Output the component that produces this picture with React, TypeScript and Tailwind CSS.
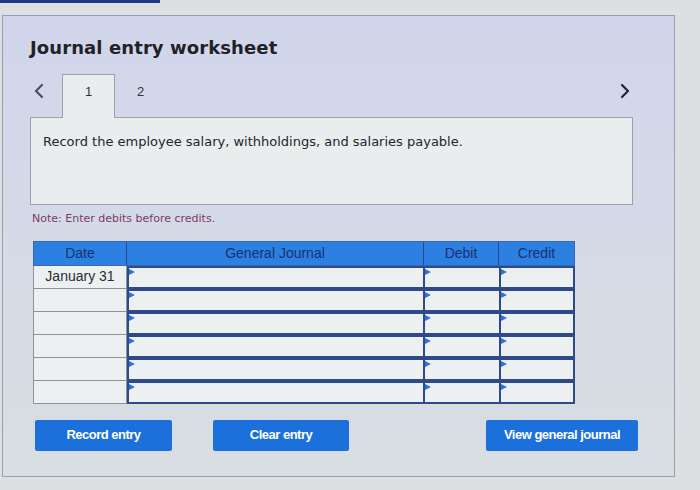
import React from "react";

const rows = ["January 31", "", "", "", "", ""];

function Flag() {
  return <span className="absolute left-0 top-[1px] w-0 h-0 border-l-[6px] border-l-[#2f6fd6] border-y-[3px] border-y-transparent" />;
}

function InputCell({ w }: { w: string }) {
  return (
    <div className={`relative ${w} h-full border-2 border-[#2e4a88] bg-[#edf0f0] -ml-[2px] first:ml-0`}>
      <Flag />
    </div>
  );
}

function Chevron({ dir, className }: { dir: "l" | "r"; className: string }) {
  return (
    <svg width="12" height="16" viewBox="0 0 12 16" className={className}>
      <path d={dir === "l" ? "M9 2 L3 8 L9 14" : "M3 2 L9 8 L3 14"} fill="none" stroke="currentColor" strokeWidth="2.2" strokeLinecap="round" strokeLinejoin="round" />
    </svg>
  );
}

export default function App() {
  return (
    <div className="w-[700px] h-[490px] bg-[#dde0e3] overflow-hidden relative" style={{ fontFamily: "'DejaVu Sans', sans-serif" }}>
      {/* top strip */}
      <div className="h-[15px] flex items-start">
        <div className="w-[160px] h-[3px] bg-[#1d3a8a]" />
      </div>

      <div className="ml-[2px] w-[673px] h-[462px] border border-[#9aa0ab] bg-gradient-to-b from-[#d1d5eb] via-[#d5dae7] to-[#d9dee2] px-[27px]">
        <h1 className="pt-[21px] text-[18px] font-bold text-[#1f2227] leading-[22px] tracking-[0.1px]">Journal entry worksheet</h1>

        {/* tabs */}
        <div className="relative mt-[15px] h-[44px] flex items-start">
          <Chevron dir="l" className="ml-[3px] mt-[9px] text-[#4a505c]" />
          <div className="ml-[17px] w-[53px] h-[44px] border border-b-0 border-[#9aa0ab] bg-[#eaedee] relative z-10 flex justify-center pt-[7px]">
            <span className="text-[13px] text-[#333]" style={{ fontFamily: "'Liberation Sans', sans-serif" }}>1</span>
          </div>
          <span className="ml-[22px] pt-[8px] text-[13px] text-[#333]" style={{ fontFamily: "'Liberation Sans', sans-serif" }}>2</span>
          <Chevron dir="r" className="ml-auto mr-[16px] mt-[9px] text-[#23272f]" />
        </div>

        {/* question box */}
        <div className="-mt-px w-[603px] h-[88px] border border-[#9aa0ab] bg-[#eaedee] pt-[14px] pl-[12px]">
          <p className="text-[13px] text-[#23262b]">Record the employee salary, withholdings, and salaries payable.</p>
        </div>

        <p className="mt-[6px] ml-[2px] text-[11px] text-[#7a3d63]">Note: Enter debits before credits.</p>

        {/* table */}
        <div className="mt-[13px] ml-[3px] w-[542px]" style={{ fontFamily: "'Liberation Sans', sans-serif" }}>
          <div className="flex h-[25px] bg-[#2b80e2] text-[14px] text-[#1a3170] border border-[#3a68b8]">
            <div className="w-[93px] flex items-center justify-center border-r border-[#244a90]">Date</div>
            <div className="w-[297px] flex items-center justify-center border-r border-[#244a90]">General Journal</div>
            <div className="w-[75px] flex items-center justify-center border-r border-[#244a90]">Debit</div>
            <div className="flex-1 flex items-center justify-center">Credit</div>
          </div>
          {rows.map((d, i) => (
            <div key={i} className="flex h-[23px]">
              <div className="w-[94px] h-full border border-t-0 border-[#8e949c] bg-[#edf0f0] flex items-center justify-center text-[14px] text-[#2a2d33]">
                {d}
              </div>
              <div className="flex flex-1 h-full">
                <InputCell w="w-[298px]" />
                <InputCell w="w-[78px]" />
                <InputCell w="flex-1" />
              </div>
            </div>
          ))}
        </div>

        {/* buttons */}
        <div className="mt-[16px] ml-[5px] flex text-white font-bold text-[13px]" style={{ fontFamily: "'Liberation Sans', sans-serif" }}>
          <button className="w-[137px] h-[31px] bg-[#1c70dc] rounded-[2px] tracking-[-0.5px]">Record entry</button>
          <button className="ml-[41px] w-[136px] h-[31px] bg-[#1c70dc] rounded-[2px] tracking-[-0.5px]">Clear entry</button>
          <button className="ml-auto mr-[9px] w-[152px] h-[31px] bg-[#1c70dc] rounded-[2px] tracking-[-0.5px]">View general journal</button>
        </div>
      </div>
    </div>
  );
}
